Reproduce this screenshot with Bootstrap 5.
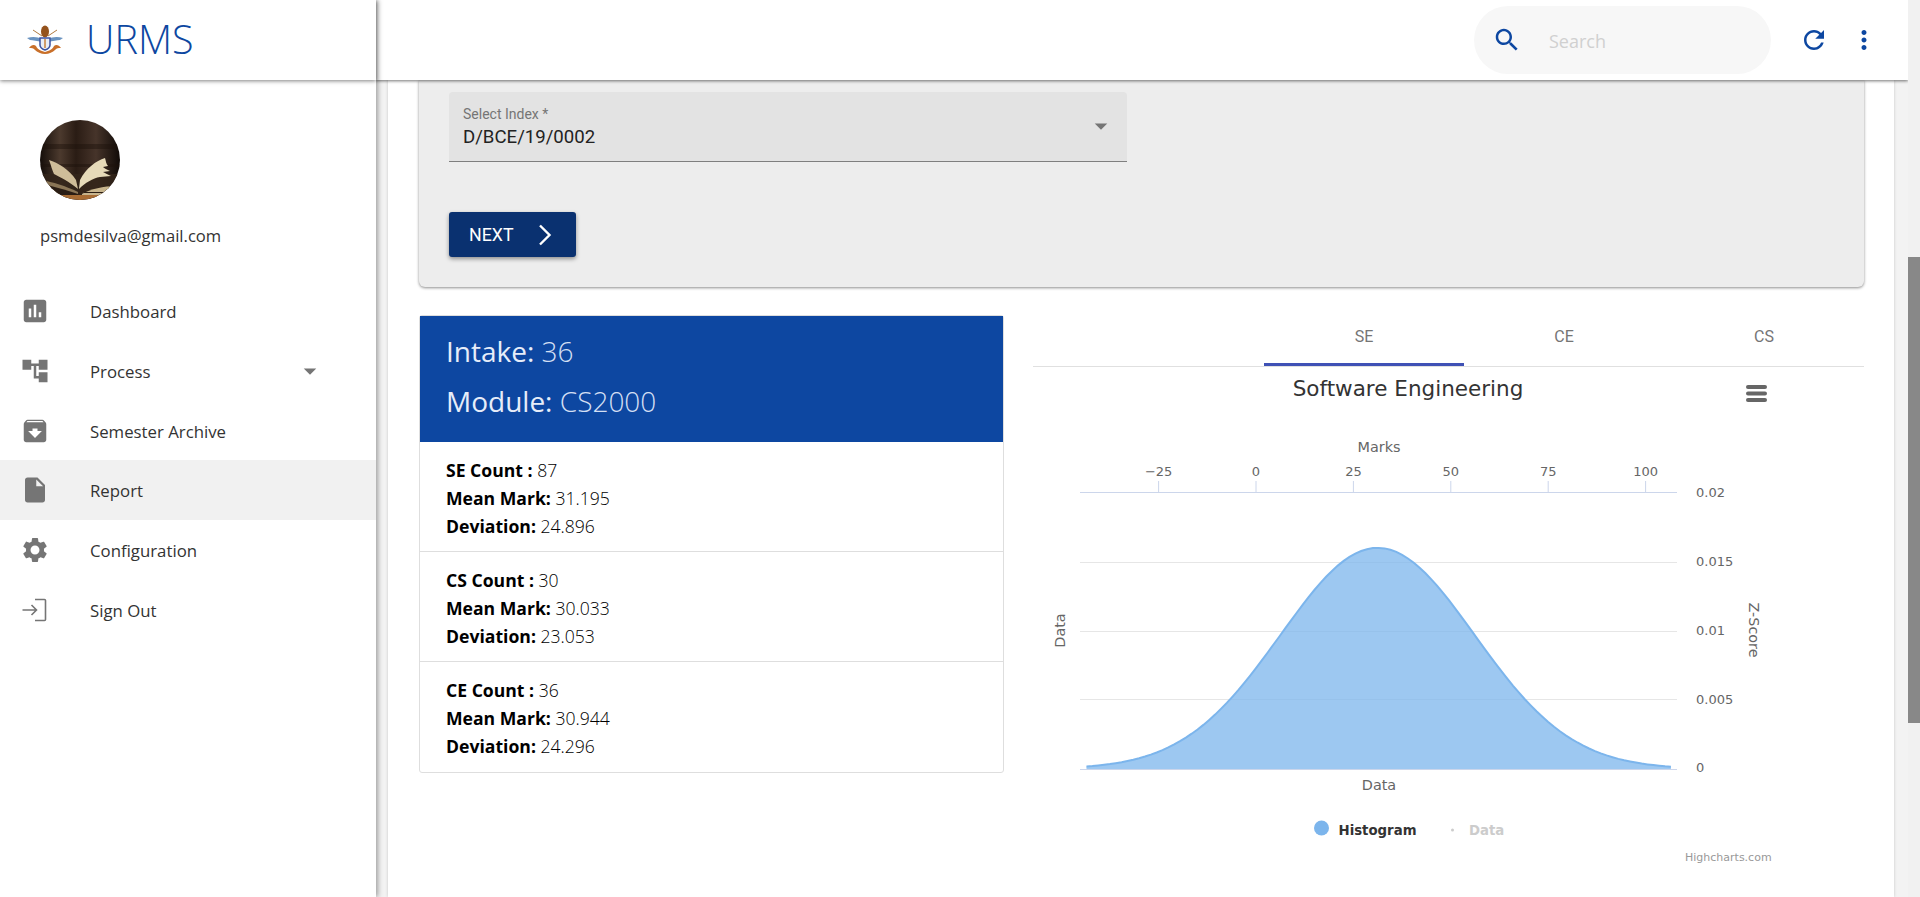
<!DOCTYPE html>
<html lang="en">
<head>
    <meta charset="UTF-8">
    <title>URMS</title>
    <link href="https://cdn.jsdelivr.net/npm/bootstrap@5.3.0/dist/css/bootstrap.min.css" rel="stylesheet">
    <style>
        html, body { height: 100%; overflow: hidden; }
        body { font-family: "Open Sans", "Liberation Sans", sans-serif; color: #333; background: #f3f3f3; }
        .shell { height: 897px; }

        .sidebar { width: 376px; background: #fff; box-shadow: 2px 0 5px rgba(0,0,0,.35); z-index: 3; }
        .brand { height: 80px; padding-left: 27px; gap: 23px; box-shadow: 0 1px 4px rgba(0,0,0,.5); }
        .brand-name { font-size: 39.5px; font-weight: 350; color: #0d47a1; line-height: 1; }
        .profile { padding: 40px 0 0 40px; height: 201px; }
        .avatar { display: block; width: 80px; height: 80px; }
        .email { margin-top: 25px; font-size: 16.6px; line-height: 22px; color: #333; }
        .side-link { height: 60px; padding-left: 20px; color: #333; font-size: 16.8px; border: 0; border-radius: 0 !important; }
        .side-link.active { background: #f1f1f1; color: #333; }
        .side-link svg { width: 30px; height: 30px; fill: #757575; flex: none; }
        .side-link span { margin-left: 40px; margin-top: 1px; }
        .side-link .drop { margin-left: auto; margin-right: 35px; }

        .main-col { width: 1532px; }
        .topbar { height: 80px; background: #fff; box-shadow: 0 1px 3px rgba(0,0,0,.55); z-index: 2; padding-right: 29px; }
        .search-pill { width: 297px; height: 68px; border-radius: 34px; background: #f7f7f7; padding-left: 18px; margin-right: 28px; }
        .search-pill svg, .top-icon { width: 30px; height: 30px; fill: #0d47a1; flex: none; }
        .search-pill span { margin-left: 27px; margin-top: 2px; color: #d0d0d0; font-size: 18px; }
        .top-icon + .top-icon { margin-left: 20px; }

        .gutter { padding: 0 14px 0 12px; height: 817px; }
        .content { background: #fff; height: 100%; padding: 0 30px 0 31px; box-shadow: 0 0 3px rgba(0,0,0,.18); overflow: hidden; }

        .select-panel { height: 207px; padding: 12px 0 0 30px; background: #ededed; border-radius: 0 0 6px 6px; box-shadow: 0 1px 3px rgba(0,0,0,.45); }
        .fake-select { width: 678px; height: 70px; padding: 14px 14px 0; background: #e3e3e3; border-bottom: 1px solid #7f7f7f; border-radius: 4px 4px 0 0; font-family: Roboto, sans-serif; position: relative; }
        .fake-select small { display: block; font-size: 14px; line-height: 16px; color: #757575; }
        .fake-select div { font-size: 18.6px; line-height: 24px; margin-top: 3px; color: #222; }
        .fake-select svg { position: absolute; right: 11px; top: 19px; width: 30px; height: 30px; fill: #757575; }
        .btn-next { width: 127px; height: 45px; margin-top: 50px; padding: 1px 0 0 20px; background: #0a3170; color: #fff; border: 0; border-radius: 3px; font-family: Roboto, sans-serif; font-size: 17.8px; box-shadow: 0 2px 4px rgba(0,0,0,.4); }
        .btn-next:hover { background: #0a3170; color: #fff; }
        .btn-next svg { width: 14px; height: 22px; margin-left: 24px; }

        .lower { margin-top: 28px; gap: 29px; }
        .stats { width: 585px; height: 458px; border: 1px solid #dedede; border-radius: 3px; color: #000; }
        .stats-head { height: 126px; padding: 10px 26px 0; background: #0d47a1; color: #e6edf9; font-size: 28px; font-weight: 400; line-height: 50px; border-radius: 0 !important; }
        .stats-head span { font-weight: 300; color: #d3dff3; }
        .stats .list-group-item { height: 110px; padding: 14px 26px 0; font-size: 17.6px; line-height: 28px; font-weight: 350; border-color: #dedede; color: #000; }
        .stats b { font-weight: 700; }

        .chart-col { width: 831px; }
        .chart-tabs { height: 52px; border-bottom: 1px solid #e0e0e0; }
        .chart-tabs .nav-link { width: 200px; height: 51px; padding: 10px 0 0; text-align: center; font-family: Roboto, sans-serif; font-size: 16px; font-weight: 400; color: #757575; border-radius: 0; }
        .chart-tabs .nav-link.active { border-bottom: 3px solid #3f51b5; }
        .chart { display: block; width: 831px; height: 500px; font-family: "DejaVu Sans", sans-serif; }
        .chart text { fill: #666; font-size: 13px; dominant-baseline: central; }
        .chart .title { fill: #333; font-size: 21.500px; }
        .chart .axis-title { font-size: 14.400px; }
        .chart .legend { font-size: 13.300px; font-weight: 700; fill: #333; }
        .chart .legend.off { fill: #ccc; }
        .chart .credit { fill: #999; font-size: 11px; }
        .grid { stroke: #e6e6e6; stroke-width: 1; }
        .axis { stroke: #ccd6eb; stroke-width: 1; }

        .scroll-track { width: 12px; background: #f1f1f1; z-index: 4; }
        .scroll-thumb { height: 466px; margin-top: 257px; background: #888; }
    </style>
</head>
<body>
    <div class="shell d-flex">
        <nav class="sidebar d-flex flex-column flex-shrink-0">
            <div class="brand d-flex align-items-center">
                <svg width="36" height="30" viewBox="0 0 36 30">
                    <path d="M0 13c6-2 11-1 15 1v3c-5-1-9-2-12-2z" fill="#6a93c0"/>
                    <path d="M36 13c-6-2-11-1-15 1v3c5-1 9-2 12-2z" fill="#6a93c0"/>
                    <path d="M6 5l9 6M30 5l-9 6" stroke="#b07a40" stroke-width="1"/>
                    <ellipse cx="18" cy="6.500" rx="4" ry="6" fill="#94521c"/>
                    <path d="M13 13h10v7c0 3-2 4-5 5-3-1-5-2-5-5z" fill="#e9edf6" stroke="#3c52a0" stroke-width="1.500"/>
                    <path d="M18 14v9" stroke="#c8803a" stroke-width="1.500"/>
                    <path d="M2 23c2-3 5-4 7-2 1 3 5 5 9 6 4-1 8-3 9-6 2-2 5-1 7 2-3 0-4 0-6 2-2 2-6 4-10 4s-8-2-10-4c-2-2-3-2-6-2z" fill="#c9702a"/>
                </svg>
                <div class="brand-name">URMS</div>
            </div>
            <div class="profile">
                <svg class="avatar" viewBox="0 0 80 80">
                    <defs>
                        <clipPath id="round"><circle cx="40" cy="40" r="40"/></clipPath>
                        <linearGradient id="shelf" x1="0" x2="1" y1="0" y2="0">
                            <stop offset="0" stop-color="#140d09"/>
                            <stop offset=".25" stop-color="#4c3a2e"/>
                            <stop offset=".45" stop-color="#2a1c14"/>
                            <stop offset=".7" stop-color="#46342a"/>
                            <stop offset="1" stop-color="#100a07"/>
                        </linearGradient>
                    </defs>
                    <g clip-path="url(#round)">
                        <rect width="80" height="80" fill="url(#shelf)"/>
                        <path d="M0 24h80v5H0zM0 44h80v3H0z" fill="#1c120c" opacity=".45"/>
                        <path d="M0 54h80v26H0z" fill="#33241a" opacity=".85"/>
                        <path d="M2 60c10 2 24 6 36 12v2H4z" fill="#8a7556"/>
                        <path d="M2 64c10 2 24 6 36 10v1H6z" fill="#2a1d14"/>
                        <path d="M42 74c8-5 22-8 34-8l-2 9H42z" fill="#c7b48c"/>
                        <path d="M44 72h32v1H44z" fill="#2a1d14"/>
                        <path d="M0 75h80v5H0z" fill="#a86c34"/>
                        <path d="M9 40c9 3 20 9 27 20l2 9c-8-7-18-12-24-15-2-4-3-9-5-14z" fill="#cfbd99"/>
                        <path d="M65 38c-9 3-19 10-25 22l-1 9c6-6 14-11 21-12l11-1c-4-2-6-3-8-4l7-1c-4-2-6-3-7-4l5-1c-2-2-2-5-3-8z" fill="#e6dab9"/>
                    </g>
                </svg>
                <div class="email">psmdesilva@gmail.com</div>
            </div>
            <div class="list-group list-group-flush">
                <a class="list-group-item list-group-item-action side-link d-flex align-items-center" href="#">
                    <svg viewBox="0 0 24 24"><path d="M19 3H5c-1.1 0-2 .9-2 2v14c0 1.1.9 2 2 2h14c1.1 0 2-.9 2-2V5c0-1.1-.9-2-2-2zM9 17H7v-7h2v7zm4 0h-2V7h2v10zm4 0h-2v-4h2v4z"/></svg>
                    <span>Dashboard</span>
                </a>
                <a class="list-group-item list-group-item-action side-link d-flex align-items-center" href="#">
                    <svg viewBox="0 0 24 24"><path d="M22 11V3h-7v3H9V3H2v8h7V8h2v10h4v3h7v-8h-7v3h-2V8h2v3z"/></svg>
                    <span>Process</span>
                    <svg class="drop" viewBox="0 0 24 24"><path d="M7 10l5 5 5-5z"/></svg>
                </a>
                <a class="list-group-item list-group-item-action side-link d-flex align-items-center" href="#">
                    <svg viewBox="0 0 24 24"><path d="M20.54 5.23l-1.39-1.68C18.88 3.21 18.47 3 18 3H6c-.47 0-.88.21-1.16.55L3.46 5.23C3.17 5.57 3 6.02 3 6.5V19c0 1.1.9 2 2 2h14c1.1 0 2-.9 2-2V6.5c0-.48-.17-.93-.46-1.27zM12 17.5L6.5 12H10v-2h4v2h3.5L12 17.5zM5.12 5l.81-1h12l.94 1H5.12z"/></svg>
                    <span>Semester Archive</span>
                </a>
                <a class="list-group-item list-group-item-action side-link active d-flex align-items-center" href="#">
                    <svg viewBox="0 0 24 24"><path d="M6 2c-1.1 0-1.99.9-1.99 2L4 20c0 1.1.89 2 1.99 2H18c1.1 0 2-.9 2-2V8l-6-6H6zm7 7V3.5L18.5 9H13z"/></svg>
                    <span>Report</span>
                </a>
                <a class="list-group-item list-group-item-action side-link d-flex align-items-center" href="#">
                    <svg viewBox="0 0 24 24"><path d="M19.14 12.94c.04-.3.06-.61.06-.94 0-.32-.02-.64-.07-.94l2.03-1.58c.18-.14.23-.41.12-.61l-1.92-3.32c-.12-.22-.37-.29-.59-.22l-2.39.96c-.5-.38-1.03-.7-1.62-.94l-.36-2.54c-.04-.24-.24-.41-.48-.41h-3.84c-.24 0-.43.17-.47.41l-.36 2.54c-.59.24-1.13.57-1.62.94l-2.39-.96c-.22-.08-.47 0-.59.22L2.74 8.87c-.12.21-.08.47.12.61l2.03 1.58c-.05.3-.09.63-.09.94s.02.64.07.94l-2.03 1.58c-.18.14-.23.41-.12.61l1.92 3.32c.12.22.37.29.59.22l2.39-.96c.5.38 1.03.7 1.62.94l.36 2.54c.05.24.24.41.48.41h3.84c.24 0 .44-.17.47-.41l.36-2.54c.59-.24 1.13-.56 1.62-.94l2.39.96c.22.08.47 0 .59-.22l1.92-3.32c.12-.22.07-.47-.12-.61l-2.01-1.58zM12 15.6c-1.98 0-3.6-1.62-3.6-3.6s1.62-3.6 3.6-3.6 3.6 1.62 3.6 3.6-1.62 3.6-3.6 3.6z"/></svg>
                    <span>Configuration</span>
                </a>
                <a class="list-group-item list-group-item-action side-link d-flex align-items-center" href="#">
                    <svg viewBox="0 0 30 30"><path d="M2.5 15h14M11.5 10l5 5-5 5M15 4.5h9.5a1 1 0 0 1 1 1v19a1 1 0 0 1-1 1H15" fill="none" stroke="#757575" stroke-width="1.6"/></svg>
                    <span>Sign Out</span>
                </a>
            </div>
        </nav>

        <div class="main-col d-flex flex-column">
            <header class="topbar d-flex align-items-center justify-content-end">
                <div class="search-pill d-flex align-items-center">
                    <svg viewBox="0 0 24 24"><path d="M15.5 14h-.79l-.28-.27C15.41 12.59 16 11.11 16 9.5 16 5.91 13.09 3 9.5 3S3 5.91 3 9.5 5.91 16 9.5 16c1.61 0 3.09-.59 4.23-1.57l.27.28v.79l5 4.99L20.49 19l-4.99-5zm-6 0C7.01 14 5 11.99 5 9.5S7.01 5 9.5 5 14 7.01 14 9.5 11.99 14 9.5 14z"/></svg>
                    <span>Search</span>
                </div>
                <svg class="top-icon" viewBox="0 0 24 24"><path d="M17.65 6.35C16.2 4.9 14.21 4 12 4c-4.42 0-7.99 3.58-7.99 8s3.57 8 7.99 8c3.73 0 6.84-2.55 7.73-6h-2.08c-.82 2.33-3.04 4-5.65 4-3.31 0-6-2.69-6-6s2.69-6 6-6c1.66 0 3.14.69 4.22 1.78L13 11h7V4l-2.35 2.35z"/></svg>
                <svg class="top-icon" viewBox="0 0 24 24"><path d="M12 8c1.1 0 2-.9 2-2s-.9-2-2-2-2 .9-2 2 .9 2 2 2zm0 2c-1.1 0-2 .9-2 2s.9 2 2 2 2-.9 2-2-.9-2-2-2zm0 6c-1.1 0-2 .9-2 2s.9 2 2 2 2-.9 2-2-.9-2-2-2z"/></svg>
            </header>
            <div class="gutter">
                <div class="content">
                    <section class="select-panel">
                        <div class="fake-select">
                            <small>Select Index *</small>
                            <div>D/BCE/19/0002</div>
                            <svg viewBox="0 0 24 24"><path d="M7 10l5 5 5-5z"/></svg>
                        </div>
                        <button class="btn btn-next d-flex align-items-center" type="button">NEXT
                            <svg viewBox="0 0 14 22"><path d="M2 1.5l9.5 9.5L2 20.500" fill="none" stroke="#fff" stroke-width="2.4"/></svg>
                        </button>
                    </section>

                    <div class="lower d-flex align-items-start">
                        <div class="card stats">
                            <div class="card-header stats-head border-0">
                                <div>Intake: <span>36</span></div>
                                <div>Module: <span>CS2000</span></div>
                            </div>
                            <ul class="list-group list-group-flush">
                                <li class="list-group-item"><b>SE Count :</b> 87<br><b>Mean Mark:</b> 31.195<br><b>Deviation:</b> 24.896</li>
                                <li class="list-group-item"><b>CS Count :</b> 30<br><b>Mean Mark:</b> 30.033<br><b>Deviation:</b> 23.053</li>
                                <li class="list-group-item"><b>CE Count :</b> 36<br><b>Mean Mark:</b> 30.944<br><b>Deviation:</b> 24.296</li>
                            </ul>
                        </div>

                        <div class="chart-col">
                            <ul class="nav chart-tabs justify-content-end">
                                <li class="nav-item"><a class="nav-link active" href="#">SE</a></li>
                                <li class="nav-item"><a class="nav-link" href="#">CE</a></li>
                                <li class="nav-item"><a class="nav-link" href="#">CS</a></li>
                            </ul>
                            <!-- chart uses page coordinates through the viewBox -->
                            <svg class="chart" viewBox="1033 367 831 500">
                                <text class="title" x="1408" y="388" text-anchor="middle">Software Engineering</text>
                                <g fill="#666">
                                    <rect x="1746" y="385" width="21" height="4" rx="2"/>
                                    <rect x="1746" y="391.500" width="21" height="4" rx="2"/>
                                    <rect x="1746" y="398" width="21" height="4" rx="2"/>
                                </g>

                                <line class="grid" x1="1080" x2="1677" y1="562.500" y2="562.500"/>
                                <line class="grid" x1="1080" x2="1677" y1="631.500" y2="631.500"/>
                                <line class="grid" x1="1080" x2="1677" y1="699.500" y2="699.500"/>
                                <path id="curve-fill" fill="#7cb5ec" fill-opacity=".75"/>
                                <path id="curve-line" fill="none" stroke="#7cb5ec" stroke-width="2"/>
                                <line class="axis" x1="1080" x2="1677" y1="769.500" y2="769.500"/>
                                <line class="axis" x1="1080" x2="1677" y1="492.500" y2="492.500"/>
                                <g id="ticks"></g>

                                <text class="axis-title" x="1379" y="447" text-anchor="middle">Marks</text>
                                <text x="1696" y="492">0.02</text>
                                <text x="1696" y="561">0.015</text>
                                <text x="1696" y="630">0.01</text>
                                <text x="1696" y="699">0.005</text>
                                <text x="1696" y="767">0</text>
                                <text class="axis-title" transform="translate(1754 630) rotate(90)" text-anchor="middle">Z-Score</text>
                                <text class="axis-title" transform="translate(1060 630.500) rotate(-90)" text-anchor="middle">Data</text>
                                <text class="axis-title" x="1379" y="785" text-anchor="middle">Data</text>

                                <circle cx="1321.500" cy="828" r="7.500" fill="#7cb5ec"/>
                                <text class="legend" x="1338.500" y="830">Histogram</text>
                                <circle cx="1452.500" cy="830" r="1.500" fill="#ccc"/>
                                <text class="legend off" x="1469" y="830">Data</text>
                                <text class="credit" x="1685" y="857">Highcharts.com</text>
                            </svg>
                        </div>
                    </div>
                </div>
            </div>
        </div>

        <div class="scroll-track flex-shrink-0">
            <div class="scroll-thumb"></div>
        </div>
    </div>

    <script src="https://cdn.jsdelivr.net/npm/bootstrap@5.3.0/dist/js/bootstrap.bundle.min.js"></script>
    <script>
        // bell curve for mean 31.195, deviation 24.896
        const mean = 31.195, dev = 24.896;
        const toX = v => 1256 + v * 3.896;
        const toY = z => 769 - z * 13800;
        let pts = [];
        for (let v = -43.5; v <= 106.8; v += 1.5) {
            let z = Math.exp(-0.5 * ((v - mean) / dev) ** 2) / (dev * Math.sqrt(2 * Math.PI));
            pts.push(toX(v).toFixed(1) + " " + toY(z).toFixed(1));
        }
        document.getElementById("curve-line").setAttribute("d", "M" + pts.join("L"));
        document.getElementById("curve-fill").setAttribute("d", "M" + pts.join("L") + "V769H" + toX(-43.5).toFixed(1) + "Z");

        let ticks = "";
        [-25, 0, 25, 50, 75, 100].forEach(v => {
            let x = toX(v);
            ticks += `<line class="axis" x1="${x}" x2="${x}" y1="481" y2="492"/>`;
            ticks += `<text x="${x}" y="471" text-anchor="middle">${v < 0 ? "\u2212" + -v : v}</text>`;
        });
        document.getElementById("ticks").innerHTML = ticks;
    </script>
</body>
</html>
